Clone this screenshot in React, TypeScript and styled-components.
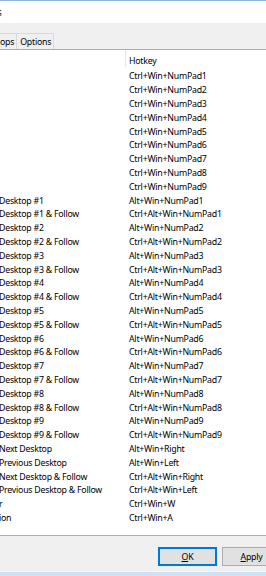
import React from "react";
import styled, { createGlobalStyle } from "styled-components";

const GlobalStyle = createGlobalStyle`
  html, body { margin: 0; padding: 0; background: #ffffff; overflow: hidden; }
  body { font-family: "Noto Sans", "Open Sans", sans-serif; }
`;

const Window = styled.div`
  width: 266px;
  height: 576px;
  display: flex;
  flex-direction: column;
  border-top: 1px solid #8fb6e2;
  box-sizing: border-box;
  overflow: hidden;
  font-size: 8.8px;
  letter-spacing: -0.25px;
  color: #000;
`;

const TitleBar = styled.div`
  height: 22px;
  background: #ffffff;
  display: flex;
  align-items: center;
  flex-shrink: 0;
`;

const TitleText = styled.span`
  margin-left: -3px;
  color: #333;
  font-size: 10px;
`;

const Dialog = styled.div`
  flex: 1;
  display: flex;
  flex-direction: column;
  background: #f0f0f0;
  min-height: 0;
`;

const TabStrip = styled.div`
  height: 26px;
  display: flex;
  align-items: flex-end;
  margin-left: -4px;
  flex-shrink: 0;
`;

const Tab = styled.div`
  height: 16px;
  box-sizing: border-box;
  padding: 0 2px 0 3px;
  display: flex;
  align-items: center;
  border: 1px solid #d9d9d9;
  border-bottom: none;
  margin-right: -1px;
  background: #f0f0f0;
`;

const ListView = styled.div`
  flex: 1;
  display: flex;
  flex-direction: column;
  background: #ffffff;
  border-top: 1px solid #adadad;
  border-bottom: 1px solid #adadad;
  min-height: 0;
`;

const HeaderRow = styled.div`
  display: grid;
  grid-template-columns: 125px 1fr;
  height: 19.5px;
  flex-shrink: 0;
`;

const HeaderCell = styled.div<{ $sep?: boolean }>`
  display: flex;
  align-items: center;
  padding-left: 3px;
  padding-top: 5px;
  border-left: ${(p) => (p.$sep ? "1px solid #e5e5e5" : "none")};
  height: 17px;
  box-sizing: border-box;
`;

const Row = styled.div`
  display: grid;
  grid-template-columns: 125px 1fr;
  height: 13.8px;
  align-items: center;
  white-space: nowrap;
`;

const NameCell = styled.div`
  margin-left: -1px;
  overflow: hidden;
`;

const KeyCell = styled.div`
  padding-left: 4px;
`;

const Footer = styled.div`
  height: 35px;
  flex-shrink: 0;
  display: flex;
  justify-content: flex-end;
  align-items: flex-start;
  padding-top: 11px;
  box-sizing: border-box;
  gap: 5px;
  margin-right: -15px;
`;

const Button = styled.div<{ $default?: boolean }>`
  width: 59px;
  height: 19px;
  box-sizing: border-box;
  display: flex;
  align-items: center;
  justify-content: center;
  background: #e1e1e1;
  border: ${(p) => (p.$default ? "2px solid #0078d7" : "1px solid #adadad")};
`;

const BottomEdge = styled.div`
  height: 4px;
  flex-shrink: 0;
  background: #cfe2f6;
  border-top: 1px solid #f7f7f7;
`;

const rows: [string, string][] = [];
for (let i = 1; i <= 9; i++) rows.push(["", `Ctrl+Win+NumPad${i}`]);
for (let i = 1; i <= 9; i++) {
  rows.push([`Desktop #${i}`, `Alt+Win+NumPad${i}`]);
  rows.push([`Desktop #${i} & Follow`, `Ctrl+Alt+Win+NumPad${i}`]);
}
rows.push(["Next Desktop", "Alt+Win+Right"]);
rows.push(["Previous Desktop", "Alt+Win+Left"]);
rows.push(["Next Desktop & Follow", "Ctrl+Alt+Win+Right"]);
rows.push(["Previous Desktop & Follow", "Ctrl+Alt+Win+Left"]);
rows.push(["r", "Ctrl+Win+W"]);
rows.push(["ion", "Ctrl+Win+A"]);

export default function App() {
  return (
    <>
      <GlobalStyle />
      <Window>
        <TitleBar>
          <TitleText>s</TitleText>
        </TitleBar>
        <Dialog>
          <TabStrip>
            <Tab>ops</Tab>
            <Tab>Options</Tab>
          </TabStrip>
          <ListView>
            <HeaderRow>
              <HeaderCell />
              <HeaderCell $sep>Hotkey</HeaderCell>
            </HeaderRow>
            {rows.map(([n, k], i) => (
              <Row key={i}>
                <NameCell>{n}</NameCell>
                <KeyCell>{k}</KeyCell>
              </Row>
            ))}
          </ListView>
          <Footer>
            <Button $default>
              <span><u>O</u>K</span>
            </Button>
            <Button>
              <span><u>A</u>pply</span>
            </Button>
          </Footer>
          <BottomEdge />
        </Dialog>
      </Window>
    </>
  );
}
